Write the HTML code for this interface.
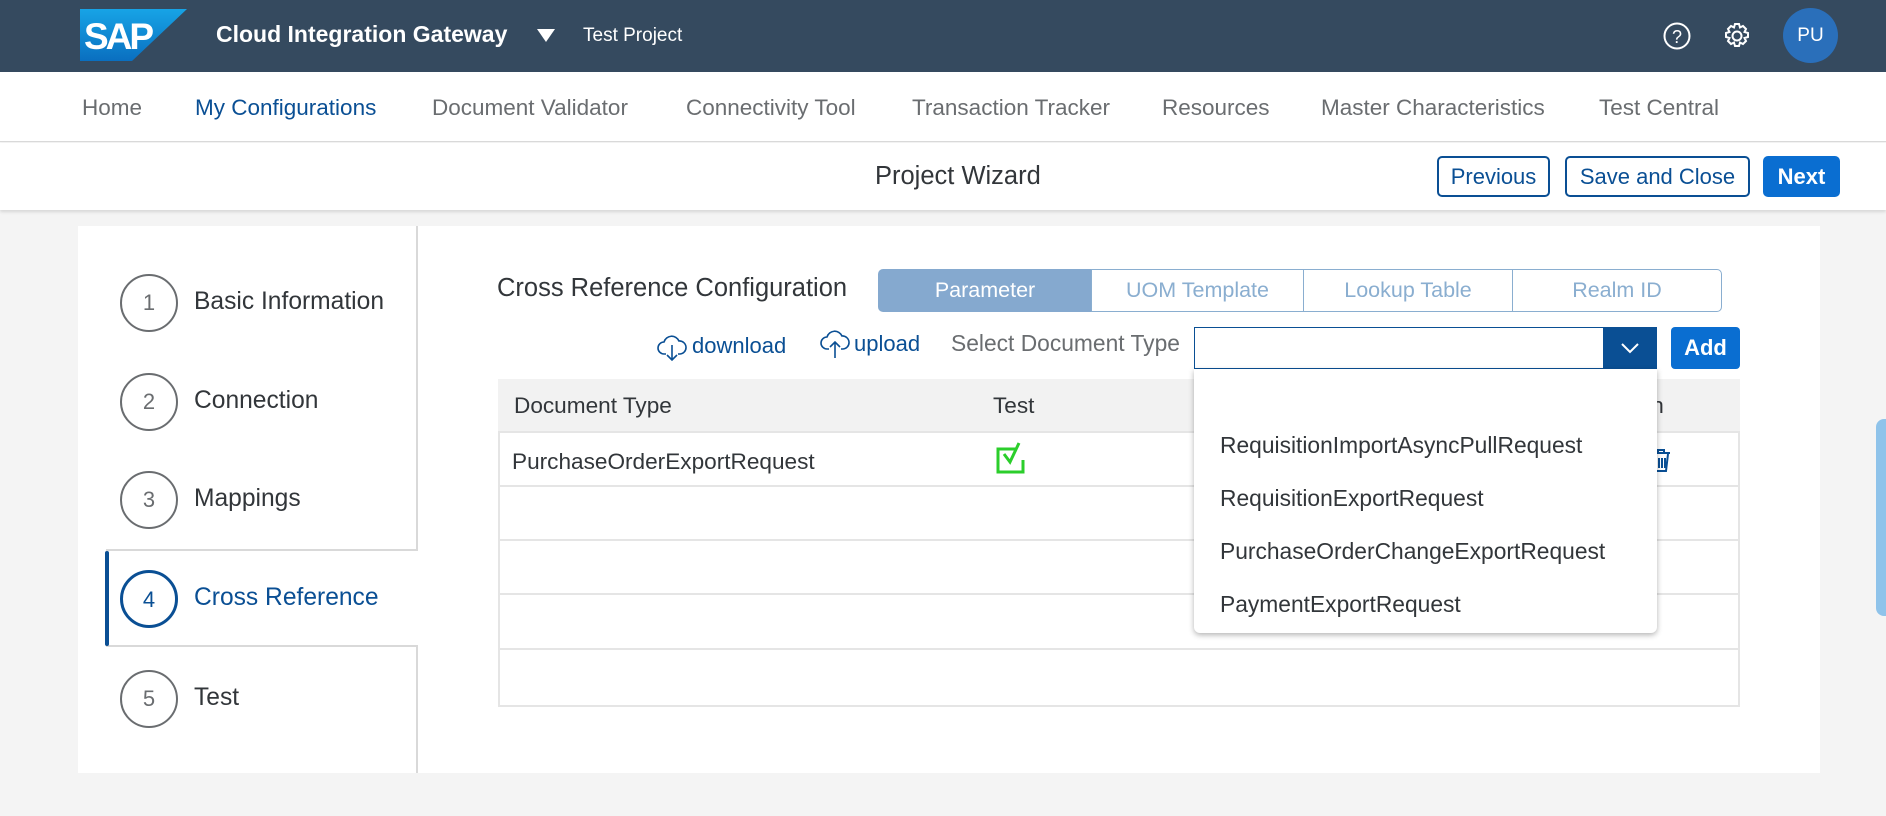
<!DOCTYPE html>
<html><head><meta charset="utf-8"><style>
*{margin:0;padding:0;box-sizing:border-box}
body{width:1886px;height:816px;background:#f4f4f4;font-family:"Liberation Sans",sans-serif;position:relative;overflow:hidden;color:#32363a}
.a{position:absolute;white-space:nowrap}
.hdr{left:0;top:0;width:1886px;height:72px;background:#354a5f}
.nav{left:0;top:72px;width:1886px;height:70px;background:#fff;border-bottom:1px solid #d9d9d9}
.nav span{position:absolute;top:23px;font-size:22.5px;color:#6a6d70}
.wiz{left:0;top:143px;width:1886px;height:67px;background:#fff;box-shadow:0 2px 3px rgba(0,0,0,.12)}
.btn{position:absolute;top:156px;height:41px;border:2px solid #0a4f94;border-radius:5px;color:#0a4f94;font-size:22px;line-height:37px;text-align:center;background:#fff}
.circ{position:absolute;left:120px;width:58px;height:58px;border-radius:50%;border:2px solid #6a6d70;font-size:22px;line-height:54px;text-align:center;color:#6a6d70}
.lbl{position:absolute;left:194px;font-size:24.6px;color:#32363a}
.seg{position:absolute;top:269px;height:43px;border:1.5px solid #8aaed0;font-size:21.5px;line-height:40px;text-align:center;color:#8aaed0;background:#fff}
.row{position:absolute;left:498px;width:1242px;height:54px;border-bottom:2px solid #e5e5e5}
.dd{position:absolute;left:1220px;font-size:22.8px;color:#32363a}
</style></head><body>
<div class="a hdr"></div>
<svg class="a" style="left:80px;top:9px" width="107" height="53"><defs><linearGradient id="g" x1="0" y1="0" x2="0" y2="1"><stop offset="0" stop-color="#17a4e6"/><stop offset="1" stop-color="#0a6fc0"/></linearGradient></defs><polygon points="0,0 107,0 52,52 0,52" fill="url(#g)"/><text x="4" y="40" font-family="Liberation Sans" font-weight="bold" font-size="37" fill="#fff" letter-spacing="-3">SAP</text></svg>
<div class="a" style="left:216px;top:21px;font-size:23px;font-weight:bold;color:#fff">Cloud Integration Gateway</div>
<div class="a" style="left:537px;top:29px;width:0;height:0;border-left:9px solid transparent;border-right:9px solid transparent;border-top:13px solid #fff"></div>
<div class="a" style="left:583px;top:25px;font-size:19px;color:#fff">Test Project</div>
<svg class="a" style="left:1662px;top:21px" width="30" height="30"><circle cx="15" cy="15" r="12.5" fill="none" stroke="#fff" stroke-width="2"/><text x="15" y="22" text-anchor="middle" font-size="18" font-family="Liberation Sans" fill="#fff">?</text></svg>
<svg class="a" style="left:1722px;top:21px" width="30" height="30" fill="none" stroke="#fff" stroke-width="2"><circle cx="15" cy="15" r="4.5"/><path d="M13 3h4l1 3.5 3-1.5 3 3-1.5 3 3.5 1v4l-3.5 1 1.5 3-3 3-3-1.5-1 3.5h-4l-1-3.5-3 1.5-3-3 1.5-3-3.5-1v-4l3.5-1-1.5-3 3-3 3 1.5z"/></svg>
<div class="a" style="left:1783px;top:8px;width:55px;height:55px;border-radius:50%;background:#2a6fba;color:#fff;font-size:19px;line-height:55px;text-align:center">PU</div>
<div class="a nav">
<span style="left:82px">Home</span><span style="left:195px;color:#0a4f94">My Configurations</span><span style="left:432px">Document Validator</span><span style="left:686px">Connectivity Tool</span><span style="left:912px">Transaction Tracker</span><span style="left:1162px">Resources</span><span style="left:1321px">Master Characteristics</span><span style="left:1599px">Test Central</span></div>
<div class="a wiz"></div>
<div class="a" style="left:875px;top:162px;font-size:25.5px;color:#32363a">Project Wizard</div>
<div class="btn" style="left:1437px;width:113px">Previous</div>
<div class="btn" style="left:1565px;width:185px">Save and Close</div>
<div class="btn" style="left:1763px;width:77px;background:#0a6ed1;border-color:#0a6ed1;color:#fff;font-weight:bold">Next</div>
<div class="a" style="left:78px;top:226px;width:1742px;height:547px;background:#fff"></div>
<div class="a" style="left:416px;top:226px;width:2px;height:324px;background:#d9d9d9"></div>
<div class="a" style="left:416px;top:646px;width:2px;height:127px;background:#d9d9d9"></div>
<div class="a" style="left:106px;top:549px;width:312px;height:2px;background:#d9d9d9"></div>
<div class="a" style="left:106px;top:645px;width:312px;height:2px;background:#d9d9d9"></div>
<div class="a" style="left:105px;top:551px;width:4px;height:95px;background:#0a4f94;border-radius:2px"></div>
<div class="circ" style="top:274px">1</div><div class="lbl" style="top:288px">Basic Information</div>
<div class="circ" style="top:373px">2</div><div class="lbl" style="top:387px">Connection</div>
<div class="circ" style="top:471px">3</div><div class="lbl" style="top:485px">Mappings</div>
<div class="circ" style="top:570px;border-color:#0a4f94;color:#0a4f94;border-width:3px">4</div><div class="lbl" style="top:584px;color:#0a4f94">Cross Reference</div>
<div class="circ" style="top:670px">5</div><div class="lbl" style="top:684px">Test</div>
<div class="a" style="left:497px;top:274px;font-size:25.5px">Cross Reference Configuration</div>
<div class="seg" style="left:878px;width:214px;background:#85a9cf;color:#fff;border-color:#85a9cf;border-radius:5px 0 0 5px">Parameter</div>
<div class="seg" style="left:1091px;width:213px">UOM Template</div>
<div class="seg" style="left:1303px;width:210px">Lookup Table</div>
<div class="seg" style="left:1512px;width:210px;border-radius:0 5px 5px 0">Realm ID</div>
<svg class="a" style="left:657px;top:332px" width="30" height="30" fill="none" stroke="#0a4f94" stroke-width="1.6"><path d="M9 22H7a6 6 0 0 1 0-12 8 8 0 0 1 15-1 6 6 0 0 1 1 13h-2M15 13v15M10 23l5 5 5-5"/></svg>
<div class="a" style="left:692px;top:333px;font-size:22px;color:#0a4f94">download</div>
<svg class="a" style="left:820px;top:330px" width="30" height="30" fill="none" stroke="#0a4f94" stroke-width="1.6"><path d="M9 19H7a6 6 0 0 1 0-12 8 8 0 0 1 15-1 6 6 0 0 1 1 13h-2M15 28V12M10 17l5-5 5 5"/></svg>
<div class="a" style="left:854px;top:331px;font-size:22px;color:#0a4f94">upload</div>
<div class="a" style="left:951px;top:330px;font-size:22.8px;color:#6a6d70">Select Document Type</div>
<div class="a" style="left:1194px;top:327px;width:463px;height:42px;border:1.5px solid #0a4f94;background:#fff"></div>
<div class="a" style="left:1603px;top:327px;width:54px;height:42px;background:#0a4f94"></div>
<svg class="a" style="left:1619px;top:340px" width="22" height="16" fill="none" stroke="#fff" stroke-width="2"><path d="M3 4l8 8 8-8"/></svg>
<div class="a" style="left:1671px;top:327px;width:69px;height:42px;background:#0a6ed1;border-radius:4px;color:#fff;font-weight:bold;font-size:22px;line-height:42px;text-align:center">Add</div>
<div class="a" style="left:498px;top:379px;width:1242px;height:328px;border:2px solid #e5e5e5;border-top:none"></div>
<div class="row" style="top:379px;background:#f2f2f2;height:54px"></div>
<div class="row" style="top:433px"></div><div class="row" style="top:487px"></div><div class="row" style="top:541px"></div><div class="row" style="top:596px"></div>
<div class="a" style="left:514px;top:393px;font-size:22.6px">Document Type</div>
<div class="a" style="left:993px;top:393px;font-size:22.6px">Test</div>
<div class="a" style="left:1601px;top:393px;font-size:22.6px">Action</div>
<div class="a" style="left:512px;top:449px;font-size:22.6px">PurchaseOrderExportRequest</div>
<svg class="a" style="left:995px;top:440px" width="36" height="34" fill="none" stroke="#2bce2b" stroke-width="3"><path d="M22 9H3v23h25V20"/><path d="M9 14l6 8 9-19"/></svg>
<svg class="a" style="left:1649px;top:448px" width="24" height="26" fill="none" stroke="#0a4f94" stroke-width="2"><path d="M3 5h18M9 5V2h6v3M5 6l2 17h10l2-17M10 10v10M13 10v10M16 10v10"/></svg>
<div class="a" style="left:1194px;top:369px;width:463px;height:264px;background:#fff;border-radius:0 0 6px 6px;box-shadow:0 2px 6px rgba(0,0,0,.3)"></div>
<div class="dd" style="top:432px">RequisitionImportAsyncPullRequest</div>
<div class="dd" style="top:485px">RequisitionExportRequest</div>
<div class="dd" style="top:538px">PurchaseOrderChangeExportRequest</div>
<div class="dd" style="top:591px">PaymentExportRequest</div>
<div class="a" style="left:1876px;top:419px;width:14px;height:197px;background:#8fc3ea;border-radius:8px 0 0 8px"></div>
</body></html>
